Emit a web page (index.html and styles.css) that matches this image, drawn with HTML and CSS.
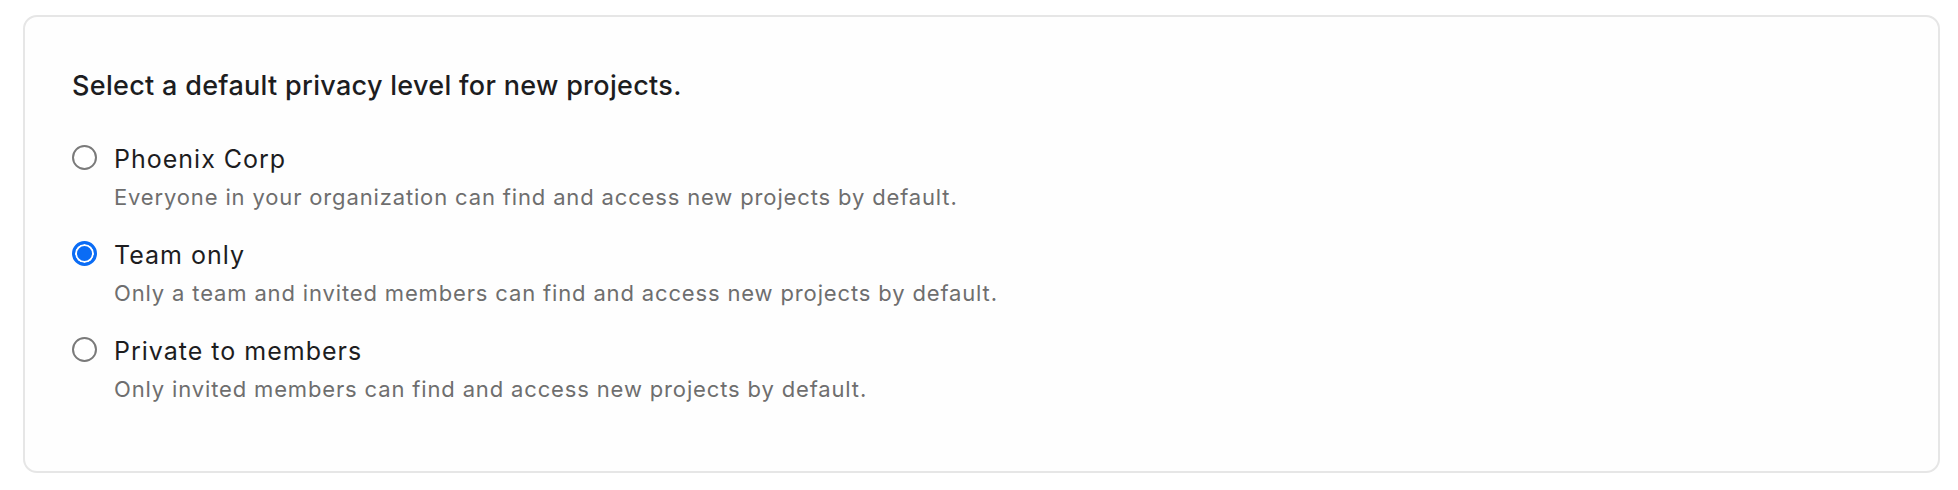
FILE: index.html
```html
<!DOCTYPE html>
<html>
<head>
<meta charset="utf-8">
<link rel="stylesheet" href="styles.css">
</head>
<body>
<div class="page">
  <div class="card">
    <h2 class="title">Select a default privacy level for new projects.</h2>
    <div class="options">
      <label class="option">
        <span class="radio"></span>
        <span class="text">
          <span class="label">Phoenix Corp</span>
          <span class="desc">Everyone in your organization can find and access new projects by default.</span>
        </span>
      </label>
      <label class="option">
        <span class="radio checked"></span>
        <span class="text">
          <span class="label">Team only</span>
          <span class="desc">Only a team and invited members can find and access new projects by default.</span>
        </span>
      </label>
      <label class="option">
        <span class="radio"></span>
        <span class="text">
          <span class="label">Private to members</span>
          <span class="desc">Only invited members can find and access new projects by default.</span>
        </span>
      </label>
    </div>
  </div>
</div>
</body>
</html>
```
FILE: styles.css
```css
html, body {
  margin: 0;
  padding: 0;
  background: #ffffff;
}
body {
  font-family: Inter, "Noto Sans", "Liberation Sans", sans-serif;
  color: #1d1d1f;
}
.page {
  padding: 15px 18px 17px 23px;
}
.card {
  box-sizing: border-box;
  height: 458px;
  border: 2px solid #e6e6e6;
  border-radius: 14px;
  background: #fefefe;
  padding: 52px 46px 0 47px;
}
.title {
  margin: 0;
  font-size: 27px;
  line-height: 34px;
  font-weight: 500;
  letter-spacing: 0.3px;
  color: #1d1d1f;
}
.options {
  margin-top: 40px;
  display: flex;
  flex-direction: column;
  gap: 28px;
}
.option {
  display: flex;
  align-items: flex-start;
  gap: 17px;
}
.radio {
  box-sizing: border-box;
  flex: none;
  width: 25px;
  height: 25px;
  margin-top: 2px;
  border-radius: 50%;
  border: 2px solid #7a7a7a;
  background: #ffffff;
}
.radio.checked {
  border: 3px solid #0a6cf5;
  background: #0a6cf5;
  box-shadow: inset 0 0 0 2px #ffffff;
}
.text {
  display: flex;
  flex-direction: column;
}
.label {
  font-size: 25px;
  line-height: 32px;
  letter-spacing: 1px;
  color: #1d1d1f;
}
.desc {
  margin-top: 8px;
  font-size: 22px;
  line-height: 28px;
  letter-spacing: 0.85px;
  color: #6e6e6e;
}
```
